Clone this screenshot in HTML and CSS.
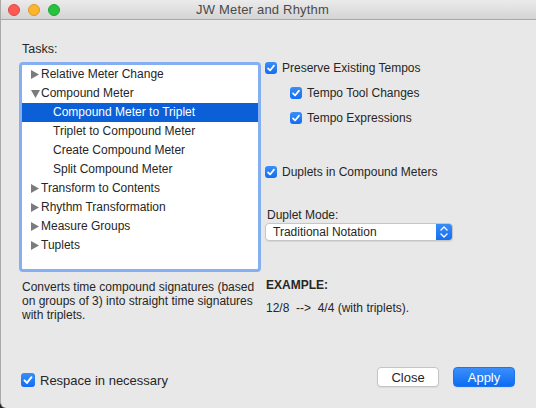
FILE: index.html
```html
<!DOCTYPE html>
<html lang="en">
<head>
  <meta charset="UTF-8">
  <title>JW Meter and Rhythm</title>
  <link rel="stylesheet" href="styles.css">
</head>
<body>
  <div class="window">
    <div class="titlebar">
      <div class="lights">
        <span class="light red"></span>
        <span class="light yellow"></span>
        <span class="light green"></span>
      </div>
      <div class="title">JW Meter and Rhythm</div>
    </div>

    <div class="main">
      <div class="left-col">
        <div class="label">Tasks:</div>
        <div class="task-list">
          <div class="row top"><svg class="tri" viewBox="0 0 8 9"><polygon points="0,0 8,4.5 0,9"/></svg>Relative Meter Change</div>
          <div class="row top"><svg class="tri" viewBox="0 0 9 8"><polygon points="0,0 9,0 4.5,8"/></svg>Compound Meter</div>
          <div class="row child selected">Compound Meter to Triplet</div>
          <div class="row child">Triplet to Compound Meter</div>
          <div class="row child">Create Compound Meter</div>
          <div class="row child">Split Compound Meter</div>
          <div class="row top"><svg class="tri" viewBox="0 0 8 9"><polygon points="0,0 8,4.5 0,9"/></svg>Transform to Contents</div>
          <div class="row top"><svg class="tri" viewBox="0 0 8 9"><polygon points="0,0 8,4.5 0,9"/></svg>Rhythm Transformation</div>
          <div class="row top"><svg class="tri" viewBox="0 0 8 9"><polygon points="0,0 8,4.5 0,9"/></svg>Measure Groups</div>
          <div class="row top"><svg class="tri" viewBox="0 0 8 9"><polygon points="0,0 8,4.5 0,9"/></svg>Tuplets</div>
        </div>
        <p class="desc">Converts time compound signatures (based on groups of 3) into straight time signatures with triplets.</p>
      </div>

      <div class="right-col">
        <label class="check first"><span class="box"><svg viewBox="0 0 12 12"><path d="M3 6.3 L5.1 8.5 L9 3.6"/></svg></span>Preserve Existing Tempos</label>
        <label class="check sub"><span class="box"><svg viewBox="0 0 12 12"><path d="M3 6.3 L5.1 8.5 L9 3.6"/></svg></span>Tempo Tool Changes</label>
        <label class="check sub"><span class="box"><svg viewBox="0 0 12 12"><path d="M3 6.3 L5.1 8.5 L9 3.6"/></svg></span>Tempo Expressions</label>
        <label class="check duplets"><span class="box"><svg viewBox="0 0 12 12"><path d="M3 6.3 L5.1 8.5 L9 3.6"/></svg></span>Duplets in Compound Meters</label>

        <div class="label mode-label">Duplet Mode:</div>
        <div class="select">
          <span class="select-text">Traditional Notation</span>
          <span class="stepper"><svg viewBox="0 0 16 18"><path d="M5 7 L8 4 L11 7 M5 11 L8 14 L11 11"/></svg></span>
        </div>

        <div class="example-title">EXAMPLE:</div>
        <div class="example">12/8&nbsp; --&gt;&nbsp; 4/4 (with triplets).</div>
      </div>
    </div>

    <div class="footer">
      <label class="check big"><span class="box"><svg viewBox="0 0 12 12"><path d="M3 6.3 L5.1 8.5 L9 3.6"/></svg></span>Respace in necessary</label>
      <div class="buttons">
        <button class="btn">Close</button>
        <button class="btn primary">Apply</button>
      </div>
    </div>
  </div>
</body>
</html>
```

FILE: styles.css
```css
html, body {
  margin: 0;
  padding: 0;
}

body {
  width: 536px;
  height: 408px;
  overflow: hidden;
  background: #2b211d;
  font-family: "Liberation Sans", Arial, sans-serif;
  color: #262626;
}

.window {
  width: 536px;
  height: 408px;
  box-sizing: border-box;
  background: #e8e8e8;
  border-left: 1px solid #a9a9a9;
  border-radius: 0 0 0 6px;
  display: flex;
  flex-direction: column;
}

/* title bar */
.titlebar {
  height: 19px;
  flex: none;
  background: linear-gradient(#ebebeb, #d4d4d4);
  border-bottom: 1px solid #a8a8a8;
  display: flex;
  align-items: center;
  position: relative;
}
.lights {
  display: flex;
  gap: 8px;
  padding-left: 7px;
}
.light {
  width: 12px;
  height: 12px;
  border-radius: 50%;
  box-sizing: border-box;
}
.red { background: #fd5c56; border: 1px solid #e2463f; }
.yellow { background: #fdb42f; border: 1px solid #de9a26; }
.green { background: #27c23f; border: 1px solid #1ba92f; }
.title {
  position: absolute;
  left: 0;
  right: 12px;
  text-align: center;
  font-size: 13px;
  color: #4a4a4a;
  letter-spacing: 0.2px;
}

/* body */
.main {
  display: flex;
  padding: 21px 0 0 18px;
}
.left-col {
  width: 242px;
}
.right-col {
  margin-left: 4px;
  display: flex;
  flex-direction: column;
  align-items: flex-start;
}
.label {
  font-size: 12.5px;
  line-height: 16px;
  padding-left: 3px;
}

.task-list {
  margin-top: 5px;
  height: 204px;
  background: #fff;
  border: 3px solid #85aff0;
  border-radius: 4px;
  font-size: 12px;
}
.row {
  height: 19px;
  line-height: 19px;
  display: flex;
  align-items: center;
  white-space: nowrap;
}
.row.top { padding-left: 9px; }
.row.child { padding-left: 31px; }
.row.selected {
  background: #0b5fd7;
  color: #fff;
}
.tri {
  width: 8px;
  height: 9px;
  margin-right: 2px;
  fill: #7b7b7b;
}
.row.top:nth-child(2) .tri {
  width: 9px;
  height: 8px;
  margin-right: 1px;
}

.desc {
  margin: 8px 0 0 3px;
  font-size: 12px;
  line-height: 14px;
  width: 238px;
}

/* checkboxes */
.check {
  display: flex;
  align-items: center;
  height: 18px;
  font-size: 12px;
  white-space: nowrap;
}
.check .box {
  width: 12px;
  height: 12px;
  border-radius: 3px;
  background: linear-gradient(#3a8ef9, #126ef3);
  margin-right: 5px;
  display: flex;
  flex: none;
}
.check .box svg {
  width: 100%;
  height: 100%;
  fill: none;
  stroke: #fff;
  stroke-width: 1.7;
  stroke-linecap: round;
  stroke-linejoin: round;
}
.check.first { margin-top: 18px; }
.check.sub { margin-top: 7px; padding-left: 25px; }
.check.duplets { margin-top: 36px; }

.mode-label {
  margin-top: 26px;
  padding-left: 2px;
  font-size: 12px;
}
.select {
  width: 188px;
  height: 18px;
  box-sizing: border-box;
  background: #fff;
  border: 1px solid #c6c6c6;
  border-radius: 4px;
  box-shadow: 0 1px 1px rgba(0, 0, 0, 0.08);
  display: flex;
  align-items: center;
  font-size: 12px;
  overflow: hidden;
}
.select-text {
  flex: 1;
  padding-left: 7px;
}
.stepper {
  width: 16px;
  height: 18px;
  background: linear-gradient(#3a8ef9, #126ef3);
  display: flex;
}
.stepper svg {
  width: 16px;
  height: 18px;
  fill: none;
  stroke: #fff;
  stroke-width: 1.4;
  stroke-linecap: round;
  stroke-linejoin: round;
}

.example-title {
  margin-top: 36px;
  padding-left: 1px;
  font-size: 12px;
  font-weight: bold;
  line-height: 16px;
}
.example {
  margin-top: 7px;
  padding-left: 1px;
  font-size: 12px;
  line-height: 16px;
}

/* footer */
.footer {
  margin-top: auto;
  display: flex;
  justify-content: space-between;
  align-items: flex-start;
  padding: 0 21px 19px 20px;
}
.check.big {
  font-size: 13px;
  margin-top: 4px;
}
.check.big .box {
  width: 14px;
  height: 14px;
  margin-right: 5px;
}
.buttons {
  display: flex;
  gap: 14px;
}
.btn {
  width: 62px;
  height: 20px;
  padding: 0;
  font-family: "Liberation Sans", Arial, sans-serif;
  font-size: 13px;
  color: #262626;
  background: #fff;
  border: 1px solid #c4c4c4;
  border-radius: 4px;
  box-shadow: 0 1px 1px rgba(0, 0, 0, 0.06);
}
.btn.primary {
  color: #fff;
  background: linear-gradient(#3b8ffa, #0d6cf3);
  border-color: #1f73ee;
}
```
